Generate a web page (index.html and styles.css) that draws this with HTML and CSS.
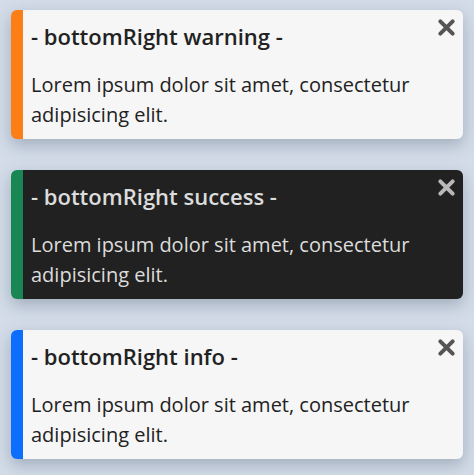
FILE: index.html
```html
<!DOCTYPE html>
<html>
<head>
<meta charset="utf-8">
<link rel="stylesheet" href="styles.css">
</head>
<body>
<div class="stack">
  <div class="toast toast-warning">
    <div class="toast-body">
      <div class="toast-title">- bottomRight warning -</div>
      <div class="toast-text">Lorem ipsum dolor sit amet, consectetur adipisicing elit.</div>
    </div>
    <button class="toast-close" aria-label="close"><svg viewBox="0 0 20 20" width="19" height="19"><path d="M3.5 3.5L16.5 16.5M16.5 3.5L3.5 16.5" stroke="currentColor" stroke-width="4.2" stroke-linecap="round"/></svg></button>
  </div>
  <div class="toast toast-success toast-dark">
    <div class="toast-body">
      <div class="toast-title">- bottomRight success -</div>
      <div class="toast-text">Lorem ipsum dolor sit amet, consectetur adipisicing elit.</div>
    </div>
    <button class="toast-close" aria-label="close"><svg viewBox="0 0 20 20" width="19" height="19"><path d="M3.5 3.5L16.5 16.5M16.5 3.5L3.5 16.5" stroke="currentColor" stroke-width="4.2" stroke-linecap="round"/></svg></button>
  </div>
  <div class="toast toast-info">
    <div class="toast-body">
      <div class="toast-title">- bottomRight info -</div>
      <div class="toast-text">Lorem ipsum dolor sit amet, consectetur adipisicing elit.</div>
    </div>
    <button class="toast-close" aria-label="close"><svg viewBox="0 0 20 20" width="19" height="19"><path d="M3.5 3.5L16.5 16.5M16.5 3.5L3.5 16.5" stroke="currentColor" stroke-width="4.2" stroke-linecap="round"/></svg></button>
  </div>
</div>
</body>
</html>
```
FILE: styles.css
```css
html, body {
  margin: 0;
  padding: 0;
  background: #d3dce8;
  height: 100%;
}
body {
  font-family: "Open Sans", "Noto Sans", sans-serif;
}
.stack {
  display: flex;
  flex-direction: column;
  gap: 31px;
  padding: 10px 11px;
}
.toast {
  display: flex;
  height: 129px;
  box-sizing: border-box;
  background: #f6f6f6;
  color: #222;
  border-left: 12px solid #fd7e14;
  border-radius: 6px;
  box-shadow: 0 6px 16px rgba(70, 85, 110, 0.35);
}
.toast-success { border-left-color: #198754; }
.toast-info { border-left-color: #0d6efd; }
.toast-dark { background: #212121; color: #dcdcdc; }
.toast-body {
  flex: 1;
  min-width: 0;
  padding: 12px 0 0 8px;
}
.toast-title {
  font-size: 22px;
  font-weight: 600;
  line-height: 28px;
}
.toast-text {
  margin-top: 20px;
  font-size: 20px;
  line-height: 30px;
}
.toast-close {
  align-self: flex-start;
  flex: none;
  background: none;
  border: 0;
  padding: 0;
  margin: 8px 7px 0 0;
  color: #555;
  width: 19px;
  height: 19px;
  display: flex;
}
.toast-dark .toast-close { color: #b8b8b8; }
```
